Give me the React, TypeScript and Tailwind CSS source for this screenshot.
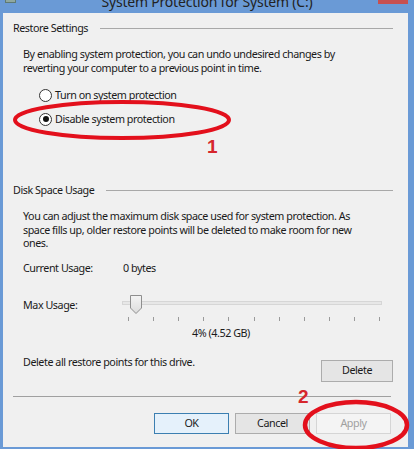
const TICKS = Array.from({ length: 11 }, (_, i) => i);

function Radio({ checked, label }: { checked?: boolean; label: string }) {
  return (
    <div className="flex items-center h-4 ml-[26px]">
      <div className="w-[13px] h-[13px] rounded-full border border-[#333] bg-white flex items-center justify-center">
        {checked && <div className="w-[6px] h-[6px] rounded-full bg-[#111]" />}
      </div>
      <span className="ml-[3px]">{label}</span>
    </div>
  );
}

function GroupHeader({ title }: { title: string }) {
  return (
    <div className="flex items-center h-4 pr-[5px]">
      <span>{title}</span>
      <div className="flex-1 h-px bg-[#a8a8a8] ml-[12px]" />
    </div>
  );
}

function Button({ label, variant }: { label: string; variant?: 'default' | 'disabled' }) {
  const cls =
    variant === 'default'
      ? 'border-[#3c7fb1] bg-[#e5f1fb]'
      : variant === 'disabled'
        ? 'border-[#d5d5d5] bg-[#f4f4f4] text-[#a0a0a0]'
        : 'border-[#acacac] bg-[#e5e5e5]';
  return (
    <div className={`w-[75px] h-[21px] border flex items-center justify-center ${cls}`}>{label}</div>
  );
}

export default function App() {
  return (
    <div
      className="relative w-[414px] h-[449px] overflow-hidden bg-[#6a9ad6] pl-[3px] pr-[6px] pt-[13px] pb-[2px] flex flex-col text-[10.75px] tracking-[-0.45px] text-[#1a1a1a] whitespace-nowrap"
      style={{ fontFamily: '"Noto Sans", "Liberation Sans", sans-serif' }}
    >
      {/* title bar, mostly cut off */}
      <div className="absolute left-[5px] -top-[6px] w-[11px] h-[9px] bg-[#8fa8a0] border border-[#5f7a72]" />
      <div className="absolute left-0 right-0 -top-[9px] text-center text-[14px] tracking-[-0.2px] text-[#222]">
        System Protection for System (C:)
      </div>
      <div className="absolute left-[378px] top-0 w-[30px] h-[4px] bg-[#c75050]" />

      {/* dialog body */}
      <div className="flex-1 bg-[#f0f0f0] px-[10px] pt-[7px] flex flex-col">
        <GroupHeader title="Restore Settings" />
        <div className="ml-[10px] mt-[11px] leading-[14px]">
          By enabling system protection, you can undo undesired changes by
          <br />
          reverting your computer to a previous point in time.
        </div>
        <div className="mt-[12px] flex flex-col gap-[8px]">
          <Radio label="Turn on system protection" />
          <Radio checked label="Disable system protection" />
        </div>

        <div className="mt-[55px]">
          <GroupHeader title="Disk Space Usage" />
        </div>
        <div className="ml-[10px] mt-[12px] leading-[13.5px]">
          You can adjust the maximum disk space used for system protection. As
          <br />
          space fills up, older restore points will be deleted to make room for new
          <br />
          ones.
        </div>
        <div className="ml-[10px] mt-[10px] flex h-4 items-center">
          <span className="w-[100px]">Current Usage:</span>
          <span>0 bytes</span>
        </div>
        <div className="ml-[10px] mt-[20px] flex">
          <span className="w-[99px] h-4 leading-4">Max Usage:</span>
          <div className="relative w-[260px] h-[26px]">
            <div className="absolute left-0 right-0 top-[4px] h-[4px] border border-[#d6d6d6] bg-[#e7e7e7]" />
            <svg className="absolute left-[8px] -top-[2px]" width="12" height="19" viewBox="0 0 12 19">
              <defs>
                <linearGradient id="th" x1="0" y1="0" x2="0" y2="1">
                  <stop offset="0" stopColor="#f4f4f4" />
                  <stop offset="1" stopColor="#dcdcdc" />
                </linearGradient>
              </defs>
              <path d="M0.5 0.5 H11.5 V13 L6 18.5 L0.5 13 Z" fill="url(#th)" stroke="#8e8e8e" />
            </svg>
            {TICKS.map((i) => (
              <div
                key={i}
                className="absolute top-[20px] w-px h-[4px] bg-[#9a9a9a]"
                style={{ left: 6 + i * 25.1 }}
              />
            ))}
          </div>
        </div>
        <div className="ml-[179px] mt-[2px] h-4 leading-4">4% (4.52 GB)</div>
        <div className="ml-[10px] mt-[13px] flex items-start justify-between pr-[5px]">
          <span className="h-4 leading-4">Delete all restore points for this drive.</span>
          <div className="mt-[6px] w-[72px] h-[22px] border border-[#acacac] bg-[#e5e5e5] flex items-center justify-center">
            Delete
          </div>
        </div>
        <div className="mt-[14px] h-px bg-[#a0a0a0] mr-[7px]" />
        <div className="mt-[16px] flex justify-end gap-[6px] pr-[7px]">
          <Button label="OK" variant="default" />
          <Button label="Cancel" />
          <Button label="Apply" variant="disabled" />
        </div>
      </div>

      {/* red annotations */}
      <svg className="absolute inset-0 pointer-events-none" width="414" height="449">
        <ellipse cx="122" cy="120" rx="107" ry="18" fill="none" stroke="#e3101c" strokeWidth="4" />
        <ellipse cx="356" cy="425" rx="51" ry="23" fill="none" stroke="#e3101c" strokeWidth="4.5" />
      </svg>
      <span
        className="absolute left-[207px] top-[133px] text-[19px] font-bold text-[#d6262c]"
        style={{ fontFamily: '"Liberation Sans", sans-serif' }}
      >
        1
      </span>
      <span
        className="absolute left-[298px] top-[383px] text-[19px] font-bold text-[#d6262c]"
        style={{ fontFamily: '"Liberation Sans", sans-serif' }}
      >
        2
      </span>
    </div>
  );
}
